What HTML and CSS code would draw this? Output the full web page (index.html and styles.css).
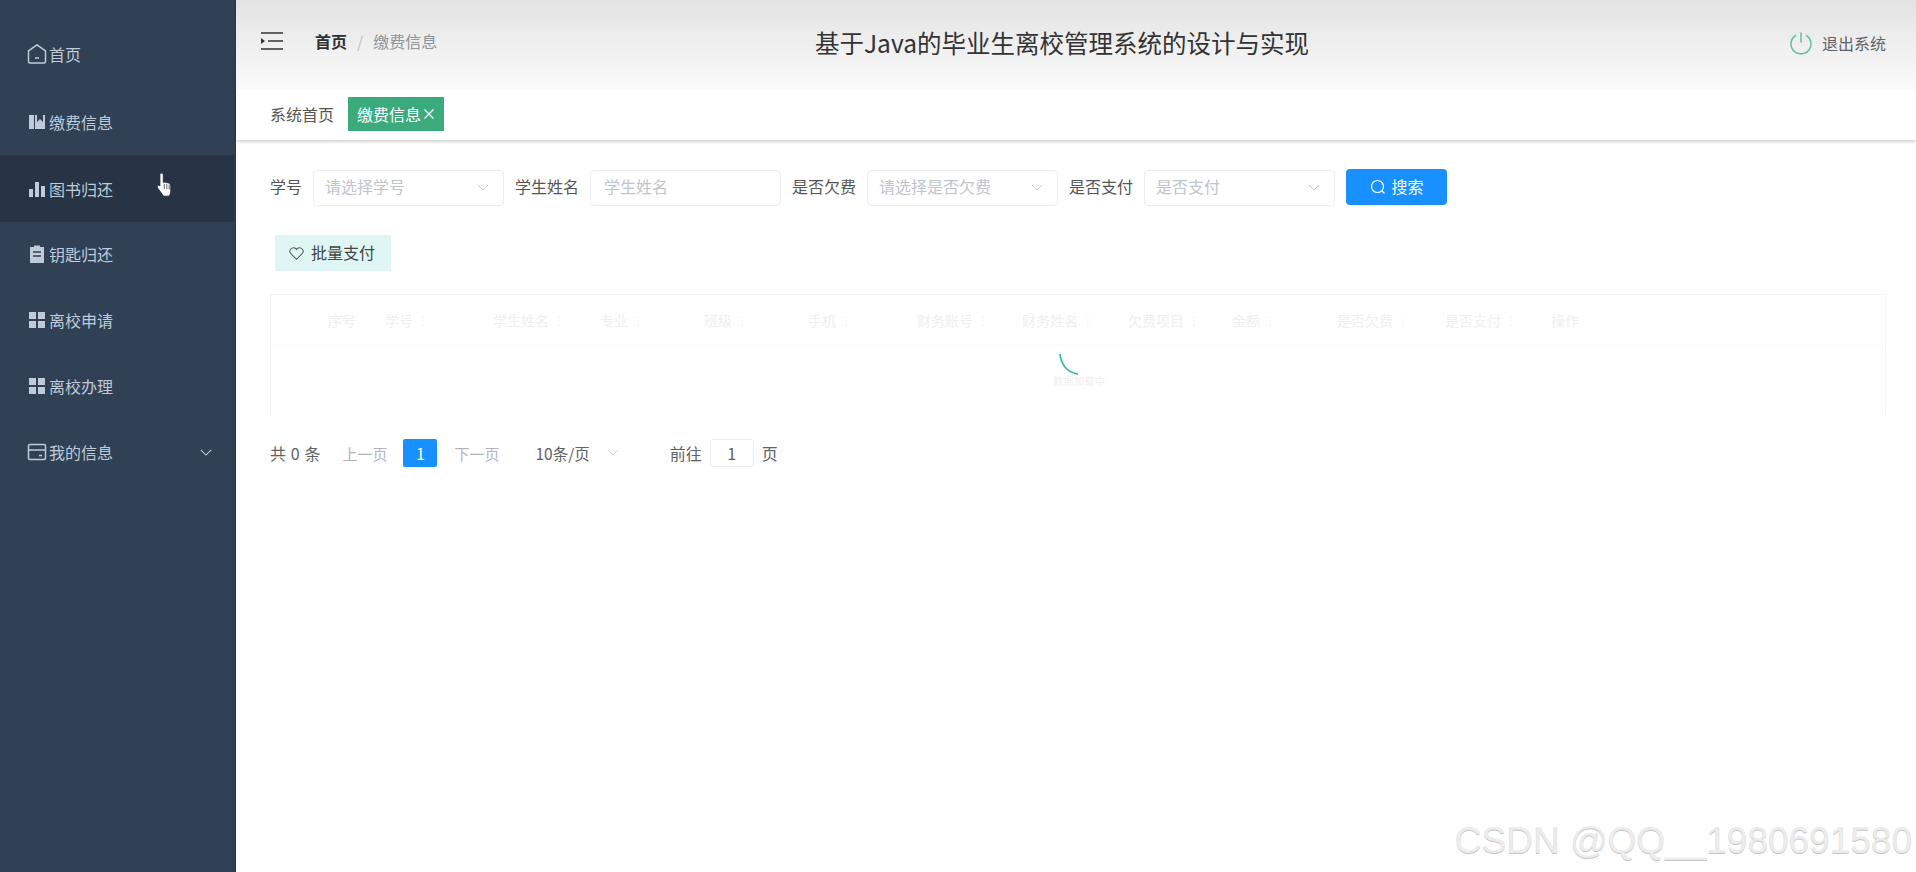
FILE: index.html
```html
<!DOCTYPE html>
<html lang="zh-CN">
<head>
    <meta charset="UTF-8">
    <title>缴费信息</title>
    <link rel="stylesheet" href="styles.css">
</head>
<body>
    <div class="layout">
        <aside class="sidebar">
            <div class="menu-item first">
                <svg class="menu-icon" viewBox="0 0 20 20"><path d="M10 .8 18.500 6.800V17.500a1.500 1.500 0 0 1-1.500 1.500H3a1.500 1.500 0 0 1-1.500-1.500V6.800Z" fill="none" stroke="currentColor" stroke-width="1.500" stroke-linejoin="round"/><path d="M8 14h4" stroke="currentColor" stroke-width="1.500"/></svg>
                <span>首页</span>
            </div>
            <div class="menu-item">
                <svg class="menu-icon" viewBox="0 0 20 20"><path d="M2 3h5v14H2zM8 3h2v7l3-3 3 3V3h2v14H8z" fill="currentColor"/></svg>
                <span>缴费信息</span>
            </div>
            <div class="menu-item active">
                <svg class="menu-icon" viewBox="0 0 20 20"><path d="M2 10h4v8H2zM8 3h4v15H8zM14 7h4v11h-4z" fill="currentColor"/></svg>
                <span>图书归还</span>
            </div>
            <div class="menu-item">
                <svg class="menu-icon" viewBox="0 0 20 20"><path d="M7 1.500h6V3h4v16H3V3h4Z" fill="currentColor"/><path d="M6 8h8M6 12h8" stroke="#304156" stroke-width="1.500"/></svg>
                <span>钥匙归还</span>
            </div>
            <div class="menu-item">
                <svg class="menu-icon" viewBox="0 0 20 20"><path d="M2 2h7v7H2zM11 2h7v7h-7zM2 11h7v7H2zM11 11h7v7h-7z" fill="currentColor"/></svg>
                <span>离校申请</span>
            </div>
            <div class="menu-item">
                <svg class="menu-icon" viewBox="0 0 20 20"><path d="M2 2h7v7H2zM11 2h7v7h-7zM2 11h7v7H2zM11 11h7v7h-7z" fill="currentColor"/></svg>
                <span>离校办理</span>
            </div>
            <div class="menu-item">
                <svg class="menu-icon" viewBox="0 0 20 20"><rect x="1.500" y="2.500" width="17" height="15" rx="1.500" fill="none" stroke="currentColor" stroke-width="1.500"/><path d="M1.500 8h17M12 13.500h3" stroke="currentColor" stroke-width="1.500"/></svg>
                <span>我的信息</span>
                <svg class="menu-arrow" viewBox="0 0 14 8"><path d="M1 1l6 6 6-6" fill="none" stroke="currentColor" stroke-width="1.200"/></svg>
            </div>
        </aside>

        <main class="main">
            <header class="topbar">
                <svg class="fold-icon" viewBox="0 0 22 18"><path d="M0 1h22M7 9h15M0 17h22" stroke="#333" stroke-width="1.600"/><path d="M0 6l4 3-4 3z" fill="#333"/></svg>
                <div class="breadcrumb">
                    <b>首页</b><i>/</i><span>缴费信息</span>
                </div>
                <h1 class="title">基于Java的毕业生离校管理系统的设计与实现</h1>
                <div class="logout">
                    <svg class="power-icon" viewBox="0 0 24 24"><path d="M7 4.200a10 10 0 1 0 10 0" fill="none" stroke="#6cc0a2" stroke-width="1.600"/><path d="M12 1.500v10" stroke="#6cc0a2" stroke-width="1.600"/></svg>
                    <span>退出系统</span>
                </div>
            </header>

            <nav class="tabs">
                <span class="tab">系统首页</span>
                <span class="tab current">缴费信息<svg class="tab-close" viewBox="0 0 12 12"><path d="M1.500 1.500l9 9M10.500 1.500l-9 9" stroke="#fff" stroke-width="1.200"/></svg></span>
            </nav>

            <section class="content">
                <form class="search">
                    <label>学号</label>
                    <div class="field">请选择学号<svg class="caret" viewBox="0 0 14 8"><path d="M1 1l6 6 6-6" fill="none" stroke="#c0c4cc" stroke-width="1.100"/></svg></div>
                    <label>学生姓名</label>
                    <div class="field wide-pad">学生姓名</div>
                    <label>是否欠费</label>
                    <div class="field">请选择是否欠费<svg class="caret" viewBox="0 0 14 8"><path d="M1 1l6 6 6-6" fill="none" stroke="#c0c4cc" stroke-width="1.100"/></svg></div>
                    <label>是否支付</label>
                    <div class="field">是否支付<svg class="caret" viewBox="0 0 14 8"><path d="M1 1l6 6 6-6" fill="none" stroke="#c0c4cc" stroke-width="1.100"/></svg></div>
                    <div class="search-btn">
                        <svg class="search-icon" viewBox="0 0 16 16"><circle cx="7.500" cy="7.500" r="6" fill="none" stroke="#fff" stroke-width="1.200"/><path d="M12 12l2.500 2.500" stroke="#fff" stroke-width="1.200"/></svg>
                        搜索
                    </div>
                </form>

                <div class="batch-btn">
                    <svg class="heart-icon" viewBox="0 0 16 16"><path d="M8 14.200 2 8.200a3.600 3.600 0 0 1 0-5A3.600 3.600 0 0 1 8 3.600a3.600 3.600 0 0 1 6-.4 3.600 3.600 0 0 1 0 5Z" fill="none" stroke="#555" stroke-width="1.100"/></svg>
                    <span>批量支付</span>
                </div>

                <div class="table">
                    <div class="thead">
                        <span>序号</span>
                        <span class="sort">学号</span>
                        <span class="sort">学生姓名</span>
                        <span class="sort">专业</span>
                        <span class="sort">班级</span>
                        <span class="sort">手机</span>
                        <span class="sort">财务账号</span>
                        <span class="sort">财务姓名</span>
                        <span class="sort">欠费项目</span>
                        <span class="sort">金额</span>
                        <span class="sort">是否欠费</span>
                        <span class="sort">是否支付</span>
                        <span>操作</span>
                    </div>
                    <div class="loading">
                        <svg class="spinner" viewBox="0 0 20 22"><path d="M1 1C2 12 9 20 19 21" fill="none" stroke="#34bf9b" stroke-width="1.800"/></svg>
                        <span>数据加载中</span>
                    </div>
                </div>

                <div class="pager">
                    <span class="total">共 0 条</span>
                    <span class="page-link">上一页</span>
                    <span class="page-num">1</span>
                    <span class="page-link">下一页</span>
                    <span class="page-size">10条/页<svg class="size-caret" viewBox="0 0 14 8"><path d="M1 1l6 6 6-6" fill="none" stroke="#c0c4cc" stroke-width="1.200"/></svg></span>
                    <span class="goto">前往<b class="page-input">1</b>页</span>
                </div>
            </section>
        </main>
    </div>

    <!-- cursor over the hovered menu row -->
    <svg class="cursor" viewBox="0 0 18 26"><path d="M5.500 1c1.200 0 1.800.9 1.800 2v7.500l1-.4c.8-.2 1.400 0 1.800.5.800-.3 1.500-.1 1.900.5.900-.3 1.700 0 2.200.8.500.7.600 1.500.6 2.600v4.500c0 2-.7 3.800-1.700 5.200H7.500L2 16.500c-1-1.100-.9-2.300-.1-2.900.8-.6 1.700-.2 2 .4V3c0-1.100.5-2 1.600-2Z" fill="#fff" stroke="#1c2733" stroke-width=".9"/><path d="M8.300 12v5M10.800 12v5M13.200 12.500v5" stroke="#1c2733" stroke-width=".7"/></svg>
    <div class="watermark">CSDN @QQ__1980691580</div>
</body>
</html>
```

FILE: styles.css
```css
* {
    box-sizing: border-box;
}
html, body {
    margin: 0;
    height: 100%;
    overflow: hidden;
}
body {
    font-family: "Noto Sans CJK SC", "Liberation Sans", sans-serif;
    font-size: 16px;
    color: #606266;
    background: #fff;
}
.layout {
    display: flex;
    height: 872px;
}

/* sidebar */
.sidebar {
    width: 236px;
    flex-shrink: 0;
    padding-top: 21px;
    background: #304156;
    border-right: 2px solid #2c3c50;
}
.menu-item {
    display: flex;
    align-items: center;
    height: 66px;
    padding-left: 27px;
    color: #bfcbd9;
}
.menu-item.first {
    margin-bottom: 2px;
}
.menu-item.active {
    height: 67px;
    margin-bottom: -1px;
    background: #263445;
}
.menu-icon {
    width: 20px;
    height: 20px;
    margin-right: 2px;
    flex-shrink: 0;
}
.menu-arrow {
    width: 12px;
    height: 7px;
    margin-left: auto;
    margin-right: 22px;
}

/* top */
.main {
    flex: 1;
    min-width: 0;
}
.topbar {
    position: relative;
    display: flex;
    align-items: center;
    height: 90px;
    padding: 0 30px 5px 25px;
    background: linear-gradient(#e3e3e3, #fbfbfb);
}
.fold-icon {
    width: 22px;
    height: 18px;
    margin-right: 32px;
    margin-bottom: 4px;
}
.breadcrumb {
    margin-bottom: 4px;
}
.breadcrumb b {
    color: #303133;
}
.breadcrumb i {
    margin: 0 10px;
    font-style: normal;
    color: #c0c4cc;
}
.breadcrumb span {
    color: #909399;
}
.title {
    position: absolute;
    left: 579px;
    top: 23px;
    margin: 0;
    font-size: 24.5px;
    font-weight: 400;
    line-height: 40px;
    color: #333;
}
.logout {
    display: flex;
    align-items: center;
    margin-left: auto;
    color: #606266;
}
.power-icon {
    width: 24px;
    height: 24px;
    margin-right: 9px;
}

/* tags */
.tabs {
    display: flex;
    align-items: center;
    height: 50px;
    padding: 0 0 2px 34px;
    background: #fff;
    box-shadow: 0 2px 3px rgba(0, 0, 0, .18);
}
.tab {
    color: #555;
    margin-right: 14px;
}
.tab.current {
    display: flex;
    align-items: center;
    height: 34px;
    padding: 0 9px;
    margin: 0;
    color: #fff;
    background: #3bab7e;
}
.tab-close {
    width: 12px;
    height: 12px;
    margin-left: 2px;
}

/* search */
.content {
    padding: 30px 30px 0 34px;
}
.search {
    display: flex;
    align-items: center;
    height: 36px;
}
.search label {
    margin-right: 11px;
    padding-bottom: 5px;
    color: #555;
}
.field {
    position: relative;
    display: flex;
    align-items: center;
    width: 191px;
    height: 36px;
    margin-right: 11px;
    padding: 0 0 5px 11px;
    border: 1px solid #ebedf0;
    border-radius: 4px;
    color: #c0c4cc;
}
.field.wide-pad {
    padding-left: 13px;
}
.caret {
    position: absolute;
    right: 14px;
    top: 13px;
    width: 12px;
    height: 7px;
}
.search-btn {
    display: flex;
    align-items: center;
    justify-content: center;
    width: 101px;
    height: 36px;
    margin: 0 0 2px 0;
    padding-bottom: 2px;
    border-radius: 4px;
    color: #fff;
    background: #1890ff;
}
.search-icon {
    width: 16px;
    height: 16px;
    margin: 2px 6px 0 0;
}
.batch-btn {
    display: flex;
    align-items: center;
    justify-content: center;
    width: 116px;
    height: 36px;
    margin: 29px 0 0 5px;
    padding: 0 2px 2px 0;
    color: #444;
    background: #e0f6f5;
}
.heart-icon {
    width: 15px;
    height: 15px;
    margin: 2px 7px 0 0;
}

/* table, masked while loading */
.table {
    position: relative;
    height: 121px;
    margin-top: 23px;
    border: 1px solid #f3f3f3;
    border-bottom: 0;
}
.thead {
    display: grid;
    grid-template-columns: 57px 108px 107px 104px 104px 109px 105px 106px 104px 105px 108px 106px 1fr;
    height: 50px;
    padding-left: 57px;
    font-size: 14px;
    line-height: 50px;
    color: #efefef;
    border-bottom: 1px solid #fbfbfb;
}
.sort::after {
    content: "⁝";
    margin-left: 8px;
    color: #f5f5f5;
}
.loading {
    position: absolute;
    left: 778px;
    top: 58px;
    display: flex;
    flex-direction: column;
    align-items: center;
    width: 60px;
    font-size: 10.5px;
    line-height: 14px;
    color: #f0f0f0;
}
.spinner {
    align-self: flex-start;
    width: 20px;
    height: 22px;
    margin: 0 0 -1px 10px;
}

/* pager */
.pager {
    display: flex;
    align-items: center;
    height: 32px;
    margin-top: 22px;
    color: #606266;
}
.total {
    margin-right: 22px;
    word-spacing: 1.2px;
}
.page-link {
    font-size: 15px;
    color: #b0b4bb;
}
.page-num {
    width: 34px;
    height: 28px;
    margin: 0 17px 0 16px;
    border-radius: 2px;
    line-height: 28px;
    text-align: center;
    color: #fff;
    background: #1890ff;
}
.page-size {
    display: flex;
    align-items: center;
    margin-left: 36px;
    font-size: 15.5px;
}
.size-caret {
    width: 10px;
    height: 6px;
    margin-left: 18px;
}
.goto {
    display: flex;
    align-items: center;
    margin-left: 52px;
}
.page-input {
    width: 44px;
    height: 28px;
    margin: 0 8px;
    border: 1px solid #ebedf0;
    border-radius: 3px;
    font-weight: 400;
    line-height: 26px;
    text-align: center;
}

/* overlays */
.cursor {
    position: absolute;
    left: 156px;
    top: 172px;
    width: 18px;
    height: 26px;
}
.watermark {
    position: absolute;
    right: 4px;
    bottom: 9px;
    font-family: "Liberation Sans", sans-serif;
    font-size: 37px;
    line-height: 44px;
    color: #ececec;
    text-shadow: 0 1px 0 #c4c4c4;
}
```
